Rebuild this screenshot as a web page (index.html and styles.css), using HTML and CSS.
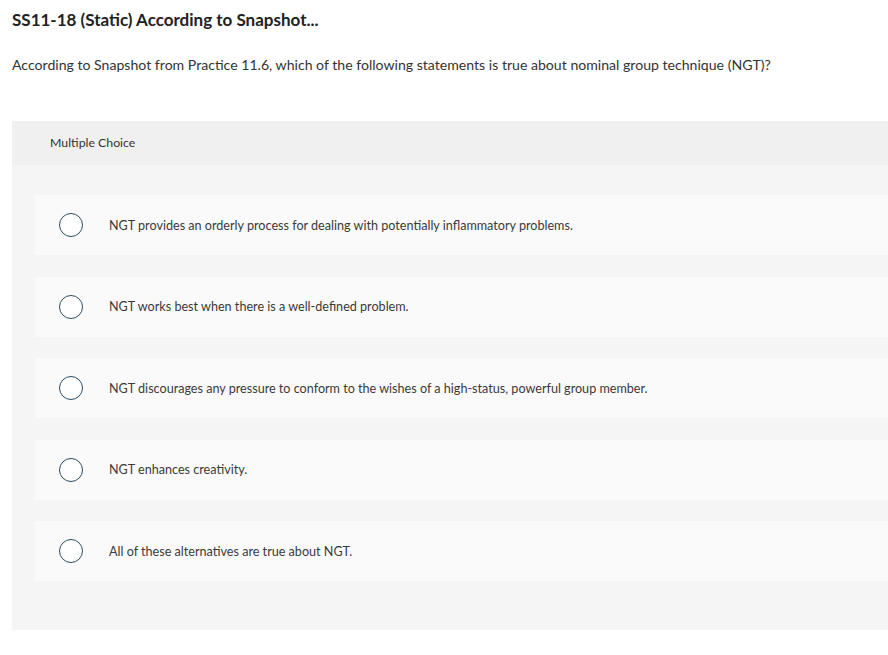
FILE: index.html
```html
<!DOCTYPE html>
<html lang="en">
<head>
    <meta charset="UTF-8">
    <title>SS11-18 (Static) According to Snapshot...</title>
    <link rel="stylesheet" href="styles.css">
</head>
<body>
    <h1 class="title">SS11-18 (Static) According to Snapshot...</h1>
    <p class="prompt">According to Snapshot from Practice 11.6, which of the following statements is true about nominal group technique (NGT)?</p>

    <div class="question">
        <div class="question-type">Multiple Choice</div>
        <div class="choices">
            <label class="choice"><span class="radio"></span><span>NGT provides an orderly process for dealing with potentially inflammatory problems.</span></label>
            <label class="choice"><span class="radio"></span><span>NGT works best when there is a well-defined problem.</span></label>
            <label class="choice"><span class="radio"></span><span>NGT discourages any pressure to conform to the wishes of a high-status, powerful group member.</span></label>
            <label class="choice"><span class="radio"></span><span>NGT enhances creativity.</span></label>
            <label class="choice"><span class="radio"></span><span>All of these alternatives are true about NGT.</span></label>
        </div>
    </div>
</body>
</html>
```

FILE: styles.css
```css
body {
    margin: 0;
    padding: 0 0 0 12px;
    font-family: Lato, "Liberation Sans", sans-serif;
    color: #333;
    background: #fff;
    overflow: hidden;
}
.title {
    margin: 0;
    padding-top: 9px;
    font-size: 17px;
    font-weight: bold;
    color: #222;
    line-height: 22px;
}
.prompt {
    margin: 0;
    padding-top: 24px;
    font-size: 14.1px;
    line-height: 20px;
    color: #333;
}
.question {
    margin-top: 46px;
    margin-right: -20px;
    background: #f5f5f5;
    padding-bottom: 49px;
}
.question-type {
    background: #f0f0f0;
    height: 44px;
    line-height: 44px;
    padding-left: 38px;
    font-size: 12.3px;
    color: #333;
}
.choices {
    display: flex;
    flex-direction: column;
    gap: 21.5px;
    padding: 30px 0 0 23px;
}
.choice {
    display: flex;
    align-items: center;
    height: 60px;
    background: #fafafa;
    font-size: 12.6px;
    color: #3a3a3a;
}
.radio {
    width: 22px;
    height: 22px;
    border: 1.5px solid #2c4a5e;
    border-radius: 50%;
    margin: 0 26px 0 24px;
    background: #fff;
    flex: none;
}
```
